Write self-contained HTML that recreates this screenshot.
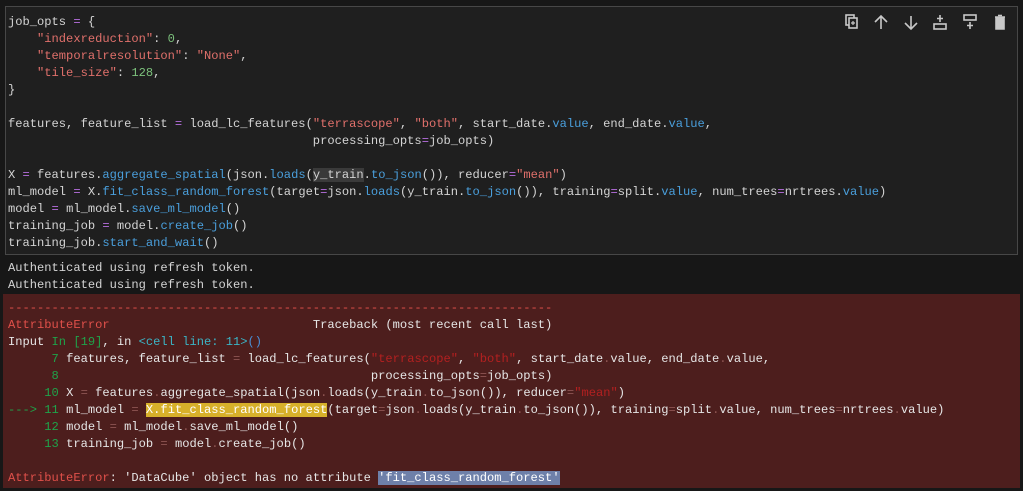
<!DOCTYPE html>
<html><head><meta charset="utf-8"><style>
*{margin:0;padding:0;box-sizing:border-box}
body{width:1023px;height:491px;background:#171717;overflow:hidden;font-family:"Liberation Mono",monospace;font-size:12.1px;color:#d4d4d4}
pre{font-family:inherit;font-size:inherit;line-height:17px;white-space:pre}
.cell{position:absolute;left:5px;top:6px;width:1013px;height:249px;background:#1f1f1f;border:1px solid #474747}
.cell pre{position:absolute;left:2px;top:7px}
.out{position:absolute;left:8px;top:260px}
.err{position:absolute;left:3px;top:294px;width:1017px;height:194px;background:#4d1e1d}
.err pre{position:absolute;left:5px;top:6px;color:#e6e6e6}
.s{color:#e0706b}.n{color:#7cc17c}.f{color:#4a9fdc}.o{color:#b86fe0}
.r{color:#e0504a}.es{color:#b32020}.g{color:#1fa34a}.c{color:#3bb5c6}.b{color:#4a8fd8}.d{color:#8e5552}
.hl{background:#d7b02a;color:#fff}.hb{background:#6e80a9;color:#fff}
.sel{background:#3a3a3a}
.icons{position:absolute;top:13px;left:843px}
</style></head><body>
<div class="cell">
<pre>job_opts <span class="o">=</span> {
    <span class="s">"indexreduction"</span>: <span class="n">0</span>,
    <span class="s">"temporalresolution"</span>: <span class="s">"None"</span>,
    <span class="s">"tile_size"</span>: <span class="n">128</span>,
}

features, feature_list <span class="o">=</span> load_lc_features(<span class="s">"terrascope"</span>, <span class="s">"both"</span>, start_date.<span class="f">value</span>, end_date.<span class="f">value</span>,
                                          processing_opts<span class="o">=</span>job_opts)

X <span class="o">=</span> features.<span class="f">aggregate_spatial</span>(json.<span class="f">loads</span>(<span class="sel">y_train</span>.<span class="f">to_json</span>()), reducer<span class="o">=</span><span class="s">"mean"</span>)
ml_model <span class="o">=</span> X.<span class="f">fit_class_random_forest</span>(target<span class="o">=</span>json.<span class="f">loads</span>(y_train.<span class="f">to_json</span>()), training<span class="o">=</span>split.<span class="f">value</span>, num_trees<span class="o">=</span>nrtrees.<span class="f">value</span>)
model <span class="o">=</span> ml_model.<span class="f">save_ml_model</span>()
training_job <span class="o">=</span> model.<span class="f">create_job</span>()
training_job.<span class="f">start_and_wait</span>()</pre>
</div>
<svg class="icons" width="175" height="20" viewBox="0 0 175 20" fill="none" stroke="#c8c8c8" stroke-width="1.6">
<rect x="3" y="2" width="8" height="10"/><rect x="6" y="5" width="8" height="10" fill="#1f1f1f"/><path d="M10 8v4M8 10h4" stroke-width="1.2"/>
<path d="M38 16V3M32 9l6-6 6 6"/>
<path d="M68 3v13M62 10l6 6 6-6"/>
<rect x="91" y="11" width="12" height="5"/><path d="M97 2v7M94 5.5h6"/>
<rect x="121" y="2" width="12" height="5"/><path d="M127 9v7M124 12.5h6"/>
<path d="M152 4h10M153 5h8v11h-8z" fill="#c8c8c8"/><path d="M155 2.5h4"/>
</svg>
<pre class="out">Authenticated using refresh token.
Authenticated using refresh token.</pre>
<div class="err"><pre><span class="r">---------------------------------------------------------------------------</span>
<span class="r">AttributeError</span>                            Traceback (most recent call last)
Input <span class="g">In [19]</span>, in <span class="c">&lt;cell line: 11&gt;</span><span class="b">()</span>
<span class="g">      7</span> features, feature_list <span class="d">=</span> load_lc_features(<span class="es">"terrascope"</span>, <span class="es">"both"</span>, start_date<span class="d">.</span>value, end_date<span class="d">.</span>value,
<span class="g">      8</span>                                           processing_opts<span class="d">=</span>job_opts)
<span class="g">     10</span> X <span class="d">=</span> features<span class="d">.</span>aggregate_spatial(json<span class="d">.</span>loads(y_train<span class="d">.</span>to_json()), reducer<span class="d">=</span><span class="es">"mean"</span>)
<span class="g">---&gt; 11</span> ml_model <span class="d">=</span> <span class="hl">X.fit_class_random_forest</span>(target<span class="d">=</span>json<span class="d">.</span>loads(y_train<span class="d">.</span>to_json()), training<span class="d">=</span>split<span class="d">.</span>value, num_trees<span class="d">=</span>nrtrees<span class="d">.</span>value)
<span class="g">     12</span> model <span class="d">=</span> ml_model<span class="d">.</span>save_ml_model()
<span class="g">     13</span> training_job <span class="d">=</span> model<span class="d">.</span>create_job()

<span class="r">AttributeError</span>: 'DataCube' object has no attribute <span class="hb">'fit_class_random_forest'</span></pre></div>
</body></html>
